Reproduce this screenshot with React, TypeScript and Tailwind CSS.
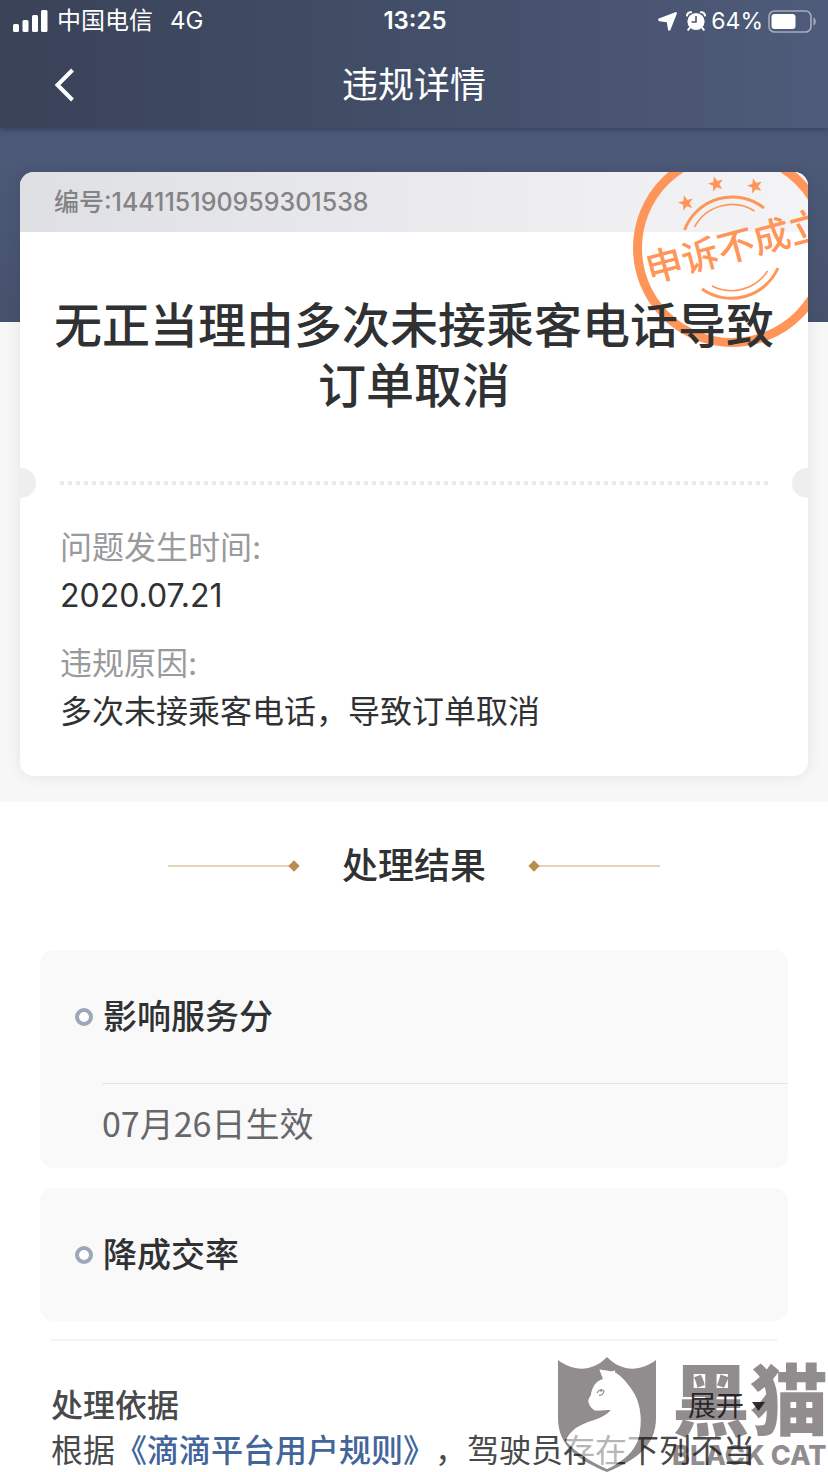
import React from "react";

const STARS = [
  { x: 686, y: 203 },
  { x: 716, y: 184 },
  { x: 755, y: 186 },
];

const DETAILS = [
  { label: "问题发生时间:", value: "2020.07.21" },
  { label: "违规原因:", value: "多次未接乘客电话，导致订单取消" },
];

const RESULTS = [
  { title: "影响服务分", note: "07月26日生效" },
  { title: "降成交率", note: "" },
];

const CAT =
  "M41.500 12.500 45 22C38 24 34 30 33 38 32 40 30 42 30.500 45 31.500 49 34 52 37 53.500 42 53.500 48 53 53 53 46 61 38 62 28 66 17 70 10 77 8 84 18 96 32 104 49 112 66 104 77 94 81 80 84 64 83 50 77 38 71 27 62 18 57 15.500L57 13.500 54 14.500Z";

function StatusBar() {
  return (
    <div className="grid h-[42px] grid-cols-[1fr_auto_1fr] items-center pl-[13px] pr-[11px] text-2xl">
      <div className="flex items-center gap-[9px]">
        <svg width="35" height="22" viewBox="0 0 35 22" fill="currentColor" aria-hidden="true">
          <rect x="0" y="14" width="6" height="8" rx="1.5" />
          <rect x="9.5" y="10" width="6" height="12" rx="1.5" />
          <rect x="19" y="5" width="6" height="17" rx="1.5" />
          <rect x="28" y="0" width="6.5" height="22" rx="1.5" />
        </svg>
        <span>中国电信</span>
        <span className="ml-2">4G</span>
      </div>
      <span className="font-semibold">13:25</span>
      <div className="flex items-center justify-end gap-[5px]">
        <svg width="19" height="19" viewBox="0 0 19 19" fill="currentColor" className="mr-1" aria-hidden="true">
          <path d="M17.200.2.9 6.500C-.3 7-.2 8.800 1.200 9.200L8.800 10.200 10 17.500C10.200 18.900 11.900 19.100 12.400 18L18.700 1.900C19.200.8 18.300-.2 17.200.2Z" />
        </svg>
        <svg width="20" height="20" viewBox="0 0 20 20" fill="none" aria-hidden="true">
          <circle cx="10" cy="10.500" r="8.600" fill="currentColor" />
          <path d="M1 4.500A4 4 0 0 1 5.200 1.200M19 4.500A4 4 0 0 0 14.800 1.200M4 16.500 2.200 18.800M16 16.500l1.800 2.300" stroke="currentColor" strokeWidth="2" strokeLinecap="round" />
          <path d="M10 5v6H5.500" stroke="#4a5673" strokeWidth="1.600" />
        </svg>
        <span className="text-[23px]">64%</span>
        <svg width="49" height="23" viewBox="0 0 49 23" aria-hidden="true">
          <rect x="1" y="1" width="42" height="21" rx="5.500" fill="none" stroke="#fff" strokeOpacity=".5" strokeWidth="1.600" />
          <rect x="3.500" y="4" width="24" height="15" rx="3" fill="#fff" />
          <path d="M45.500 7.500c3 1 3 7 0 8Z" fill="#fff" fillOpacity=".5" />
        </svg>
      </div>
    </div>
  );
}

function Stamp() {
  return (
    <svg
      width="200"
      height="200"
      viewBox="632 148 200 200"
      fill="none"
      stroke="#ff9558"
      className="absolute -right-6 -top-6"
    >
      <circle cx="732" cy="248" r="94.500" strokeWidth="9" />
      <path d="M684.500 230A51 51 0 0 1 764 208" strokeWidth="3" />
      <path d="M694.500 227A42.500 42.500 0 0 1 754.500 211" strokeWidth="1.600" />
      <path d="M702 289A51 51 0 0 0 778 268" strokeWidth="3" />
      <path d="M712 286A43 43 0 0 0 767.500 271" strokeWidth="1.600" />
      {STARS.map((star) => (
        <path
          key={star.x}
          transform={`translate(${star.x} ${star.y}) rotate(-15)`}
          d="M0-8 2-2.600 7.600-2.500 3.200 1 4.700 6.500 0 3.300-4.700 6.500-3.200 1-7.600-2.500-2-2.600Z"
          fill="#ff9558"
          stroke="none"
        />
      ))}
      <text
        x="736"
        y="260"
        transform="rotate(-15 734 247)"
        textAnchor="middle"
        fill="#ff9558"
        stroke="none"
        className="text-[37px] font-medium"
      >
        申诉不成立
      </text>
    </svg>
  );
}

function Watermark() {
  return (
    <div className="pointer-events-none absolute bottom-0 right-0 flex items-end gap-4 text-[#231a1e]/50">
      <svg width="98" height="115" viewBox="0 0 98 115" aria-hidden="true">
        <path
          fillRule="evenodd"
          fill="currentColor"
          d={`M0 3c14 11 34 13 49-3 15 16 35 14 49 3v58c0 27-19 42-49 54C19 103 0 88 0 61Z${CAT}`}
        />
        <path fill="#fff" fillOpacity=".6" d={CAT} />
        <path d="M39 36q3-5 7-2-1 5-5 4M43 32v3" fill="none" stroke="currentColor" strokeWidth="1.200" />
      </svg>
      <div className="flex flex-col">
        <span className="text-[78px] font-black leading-[76px]">黑猫</span>
        <span className="text-[27px] font-extrabold leading-8">BLACK CAT</span>
      </div>
    </div>
  );
}

export default function App() {
  return (
    <div
      lang="zh-CN"
      className="relative min-h-screen overflow-hidden bg-white font-['Inter','Noto_Sans_CJK_SC',sans-serif] text-[#303133]"
    >
      <header className="relative bg-linear-to-r from-[#394257] via-[#434e68] to-[#4e5b7a] text-white shadow-[0_2px_6px_rgba(30,38,60,0.5)]">
        <StatusBar />
        <div className="grid h-[86px] grid-cols-[1fr_auto_1fr] items-center px-[54px]">
          <button type="button" aria-label="返回" className="w-6">
            <svg width="22" height="34" viewBox="0 0 22 34" fill="none" stroke="currentColor" strokeWidth="4">
              <path d="M18.500 2 3.500 17l15 15" />
            </svg>
          </button>
          <h1 className="text-4xl">违规详情</h1>
        </div>
      </header>

      <section className="bg-[#f7f7f7] bg-[linear-gradient(#4d5a79,#46526c)] bg-[length:100%_194px] bg-no-repeat px-5 pb-[26px] pt-11">
        <div className="relative overflow-hidden rounded-[14px] bg-white shadow-[0_0_16px_rgba(0,0,0,0.08)]">
          <div className="h-[60px] bg-linear-to-r from-[#dfe0e4] to-[#f4f4f6] px-[34px] text-[25px] font-medium leading-[60px] text-[#838385]">
            编号:144115190959301538
          </div>
          <Stamp />
          <h2 className="relative px-[34px] pb-[52px] pt-16 text-center text-5xl font-medium leading-[60px]">
            无正当理由多次未接乘客电话导致订单取消
          </h2>
          <div className="-mx-[14px] flex h-[30px] items-center gap-6">
            <span className="size-[30px] rounded-full bg-[#eee]" />
            <span className="h-1 grow bg-[repeating-linear-gradient(90deg,#ebebeb_0_4px,transparent_4px_8px)]" />
            <span className="size-[30px] rounded-full bg-[#eee]" />
          </div>
          <dl className="flex flex-col gap-5 px-10 pb-10 pt-[26px] text-[32px] leading-[48px]">
            {DETAILS.map((item) => (
              <div key={item.label}>
                <dt className="text-[#999a9c]">{item.label}</dt>
                <dd>{item.value}</dd>
              </div>
            ))}
          </dl>
        </div>
      </section>

      <main className="px-10">
        <div className="flex items-center justify-center gap-11 pb-[60px] pt-10">
          <div className="flex items-center">
            <span className="h-0.5 w-[122px] bg-[#e3d4b8]" />
            <span className="size-2 rotate-45 bg-[#b98d4d]" />
          </div>
          <h2 className="text-4xl font-medium leading-[48px]">处理结果</h2>
          <div className="flex items-center">
            <span className="size-2 rotate-45 bg-[#b98d4d]" />
            <span className="h-0.5 w-[122px] bg-[#e3d4b8]" />
          </div>
        </div>

        <div className="flex flex-col gap-5">
          {RESULTS.map((item) => (
            <section key={item.title} className="rounded-[14px] bg-[#f9f9f9]">
              <h3 className="flex h-[133px] items-center gap-2.5 pl-[35px] text-[34px] font-medium">
                <span className="size-[18px] rounded-full border-4 border-[#9da7b8] bg-white" />
                {item.title}
              </h3>
              {item.note && (
                <p className="ml-[62px] border-t border-[#e5e5e5] pb-1.5 font-['Noto_Sans_CJK_SC',sans-serif] text-[34px] leading-[78px] text-[#66676a]">
                  {item.note}
                </p>
              )}
            </section>
          ))}
        </div>

        <section className="mx-[11px] mt-[18px] border-t-2 border-[#f3f3f3] pt-10 text-[32px] text-[#48494b]">
          <div className="flex h-[50px] items-center justify-between pr-3">
            <h3 className="font-medium">处理依据</h3>
            <button type="button" className="flex items-center gap-2 text-[28px] text-[#303133]">
              展开
              <svg width="13" height="9" viewBox="0 0 13 9" fill="currentColor" aria-hidden="true">
                <path d="M0 0h13L6.500 9Z" />
              </svg>
            </button>
          </div>
          <p className="whitespace-nowrap leading-10 [text-spacing-trim:space-all]">
            根据
            <a href="#rules" className="font-medium text-[#42659a]">
              《滴滴平台用户规则》
            </a>
            ，驾驶员存在下列不当
          </p>
        </section>
      </main>
      <Watermark />
    </div>
  );
}
